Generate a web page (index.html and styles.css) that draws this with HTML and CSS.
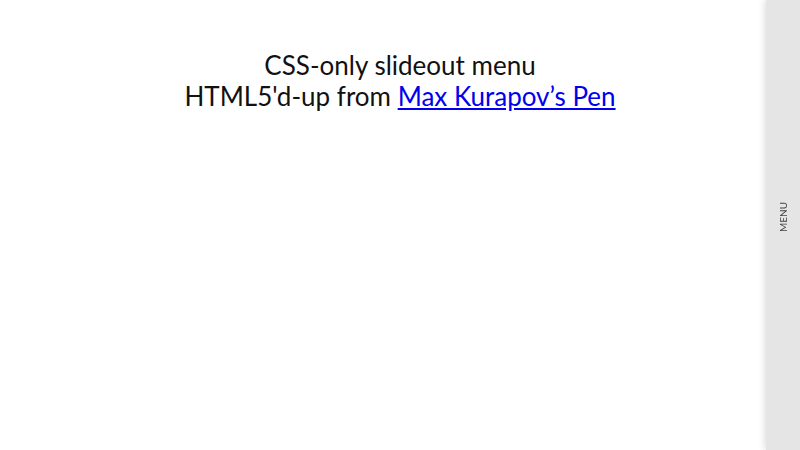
FILE: index.html
```html
<!DOCTYPE html>
<html lang="en">
<head>
<meta charset="utf-8">
<title>CSS-only slideout menu</title>
<link rel="stylesheet" href="styles.css">
</head>
<body>
  <main class="intro">
    <p class="intro-text">CSS-only slideout menu<br>HTML5'd-up from <a href="#">Max Kurapov’s Pen</a></p>
  </main>
  <nav class="slideout">
    <span class="slideout-label">MENU</span>
  </nav>
</body>
</html>
```
FILE: styles.css
```css
html, body {
  margin: 0;
  height: 100%;
  background: #fff;
  font-family: "Lato", "Open Sans", sans-serif;
  overflow: hidden;
}

.intro {
  padding-top: 50px;
  text-align: center;
}

.intro-text {
  margin: 0;
  font-size: 26px;
  line-height: 31px;
  color: #111;
}

.intro-text a {
  color: #0000ee;
}

/* collapsed drawer pinned to the right edge */
.slideout {
  position: fixed;
  top: 0;
  right: 0;
  bottom: 0;
  width: 34px;
  background: #e5e5e5;
  box-shadow: -2px 0 6px rgba(0, 0, 0, 0.12);
  display: flex;
  align-items: center;
  justify-content: center;
  padding-bottom: 16px;
  box-sizing: border-box;
}

.slideout-label {
  transform: rotate(-90deg);
  font-size: 10px;
  color: #444;
}
```
